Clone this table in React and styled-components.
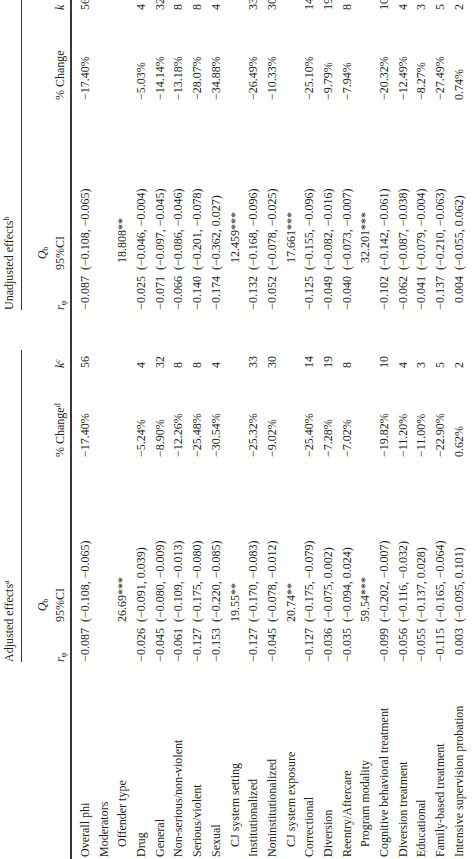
import React from "react";
import styled, { createGlobalStyle } from "styled-components";

const Global = createGlobalStyle`
  html, body { margin: 0; padding: 0; background: #ffffff; }
  body { overflow: hidden; }
`;

const COLS = "197px 40px 165px 89px 58px 40px 170px 90px 40px";

const Stage = styled.div`
  width: 474px;
  height: 859px;
  overflow: hidden;
  background: #ffffff;
`;

const Sheet = styled.div`
  width: 889px;
  height: 474px;
  transform-origin: 0 0;
  transform: translateY(859px) rotate(-90deg);
  font-family: "Liberation Serif", "Times New Roman", serif;
  font-size: 12px;
  color: #231f20;
`;

const SpanRow = styled.div`
  display: grid;
  grid-template-columns: ${COLS};
  height: 22px;
`;

const Spanner = styled.div`
  grid-column: ${(p) => p.$cols};
  margin-right: ${(p) => p.$trim}px;
  line-height: 18px;
  height: 22px;
  box-sizing: border-box;
  border-bottom: 1px solid #3a3637;
  white-space: nowrap;
`;

const HeadRow = styled.div`
  display: grid;
  grid-template-columns: ${COLS};
  height: 48px;
`;

const HeadCell = styled.div`
  display: flex;
  flex-direction: column;
  justify-content: flex-end;
  align-items: flex-start;
  padding-bottom: 3px;
  line-height: 14px;
  white-space: nowrap;
`;

const StackHead = styled.div`
  display: flex;
  flex-direction: column;
  align-items: center;
  gap: 4px;
`;

const Rule = styled.div`
  height: 1.5px;
  background: #3a3637;
`;

const Body = styled.div`
  padding-top: 4.5px;
`;

const Row = styled.div`
  display: grid;
  grid-template-columns: ${COLS};
  height: 18.7px;
  line-height: 18.7px;
  white-space: nowrap;
`;

const Label = styled.div`
  padding-left: ${(p) => (p.$sub ? 12 : 2)}px;
`;

const Cell = styled.div`
  text-align: ${(p) => (p.$right ? "right" : "left")};
  padding-right: ${(p) => (p.$right ? 6 : 0)}px;
  padding-left: ${(p) => p.$inset || 0}px;
`;

const It = styled.i`
  font-style: italic;
`;

const Sub = styled.sub`
  font-size: 8px;
  vertical-align: -2px;
  line-height: 0;
  font-style: normal;
`;

const Sup = styled.sup`
  font-size: 8px;
  vertical-align: 4px;
  line-height: 0;
  font-style: normal;
`;

const R = () => (
  <>
    <It>r</It>
    <Sub>φ</Sub>
  </>
);

const Qb = () => (
  <span>
    <It>Q</It>
    <Sub>b</Sub>
  </span>
);

const rows = [
  { label: "Overall phi", a: ["−0.087", "(−0.108, −0.065)", "−17.40%", "56"], u: ["−0.087", "(−0.108, −0.065)", "−17.40%", "56"] },
  { label: "Moderators" },
  { label: "Offender type", sub: true, qa: "26.69***", qu: "18.808**" },
  { label: "Drug", a: ["−0.026", "(−0.091, 0.039)", "−5.24%", "4"], u: ["−0.025", "(−0.046, −0.004)", "−5.03%", "4"] },
  { label: "General", a: ["−0.045", "(−0.080, −0.009)", "−8.90%", "32"], u: ["−0.071", "(−0.097, −0.045)", "−14.14%", "32"] },
  { label: "Non-serious/non-violent", a: ["−0.061", "(−0.109, −0.013)", "−12.26%", "8"], u: ["−0.066", "(−0.086, −0.046)", "−13.18%", "8"] },
  { label: "Serious/violent", a: ["−0.127", "(−0.175, −0.080)", "−25.48%", "8"], u: ["−0.140", "(−0.201, −0.078)", "−28.07%", "8"] },
  { label: "Sexual", a: ["−0.153", "(−0.220, −0.085)", "−30.54%", "4"], u: ["−0.174", "(−0.362, 0.027)", "−34.88%", "4"] },
  { label: "CJ system setting", sub: true, qa: "19.55**", qu: "12.459***" },
  { label: "Institutionalized", a: ["−0.127", "(−0.170, −0.083)", "−25.32%", "33"], u: ["−0.132", "(−0.168, −0.096)", "−26.49%", "33"] },
  { label: "Noninstitutionalized", a: ["−0.045", "(−0.078, −0.012)", "−9.02%", "30"], u: ["−0.052", "(−0.078, −0.025)", "−10.33%", "30"] },
  { label: "CJ system exposure", sub: true, qa: "20.74**", qu: "17.661***" },
  { label: "Correctional", a: ["−0.127", "(−0.175, −0.079)", "−25.40%", "14"], u: ["−0.125", "(−0.155, −0.096)", "−25.10%", "14"] },
  { label: "Diversion", a: ["−0.036", "(−0.075, 0.002)", "−7.28%", "19"], u: ["−0.049", "(−0.082, −0.016)", "−9.79%", "19"] },
  { label: "Reentry/Aftercare", a: ["−0.035", "(−0.094, 0.024)", "−7.02%", "8"], u: ["−0.040", "(−0.073, −0.007)", "−7.94%", "8"] },
  { label: "Program modality", sub: true, qa: "59.54***", qu: "32.201***" },
  { label: "Cognitive behavioral treatment", a: ["−0.099", "(−0.202, −0.007)", "−19.82%", "10"], u: ["−0.102", "(−0.142, −0.061)", "−20.32%", "10"] },
  { label: "Diversion treatment", a: ["−0.056", "(−0.116, −0.032)", "−11.20%", "4"], u: ["−0.062", "(−0.087, −0.038)", "−12.49%", "4"] },
  { label: "Educational", a: ["−0.055", "(−0.137, 0.028)", "−11.00%", "3"], u: ["−0.041", "(−0.079, −0.004)", "−8.27%", "3"] },
  { label: "Family-based treatment", a: ["−0.115", "(−0.165, −0.064)", "−22.90%", "5"], u: ["−0.137", "(−0.210, −0.063)", "−27.49%", "5"] },
  { label: "Intensive supervision probation", a: ["0.003", "(−0.095, 0.101)", "0.62%", "2"], u: ["0.004", "(−0.055, 0.062)", "0.74%", "2"] },
];

const Group = ({ vals, q, inset }) => {
  if (vals) {
    return (
      <>
        <Cell $right>{vals[0]}</Cell>
        <Cell>{vals[1]}</Cell>
        <Cell>{vals[2]}</Cell>
        <Cell>{vals[3]}</Cell>
      </>
    );
  }
  return (
    <>
      <Cell />
      <Cell $inset={inset}>{q || ""}</Cell>
      <Cell />
      <Cell />
    </>
  );
};

export default function App() {
  return (
    <Stage>
      <Global />
      <Sheet>
        <SpanRow>
          <Spanner $cols="2 / 6" $trim={40}>
            Adjusted effects<Sup>a</Sup>
          </Spanner>
          <Spanner $cols="6 / 10" $trim={0}>
            Unadjusted effects<Sup>b</Sup>
          </Spanner>
        </SpanRow>
        <HeadRow>
          <HeadCell />
          <HeadCell>
            <span>
              <R />
            </span>
          </HeadCell>
          <HeadCell>
            <StackHead>
              <Qb />
              <span>95%CI</span>
            </StackHead>
          </HeadCell>
          <HeadCell>
            <span>
              % Change<Sup>d</Sup>
            </span>
          </HeadCell>
          <HeadCell>
            <span>
              <It>k</It>
              <Sup>c</Sup>
            </span>
          </HeadCell>
          <HeadCell>
            <span>
              <R />
            </span>
          </HeadCell>
          <HeadCell>
            <StackHead>
              <Qb />
              <span>95%CI</span>
            </StackHead>
          </HeadCell>
          <HeadCell>
            <span>% Change</span>
          </HeadCell>
          <HeadCell>
            <span>
              <It>k</It>
            </span>
          </HeadCell>
        </HeadRow>
        <Rule />
        <Body>
          {rows.map((r) => (
            <Row key={r.label}>
              <Label $sub={r.sub}>{r.label}</Label>
              <Group vals={r.a} q={r.qa} inset={0} />
              <Group vals={r.u} q={r.qu} inset={7} />
            </Row>
          ))}
        </Body>
      </Sheet>
    </Stage>
  );
}
